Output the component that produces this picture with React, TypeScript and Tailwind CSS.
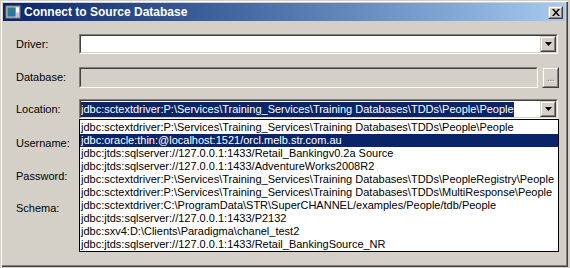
import React from "react";

const items = [
  "jdbc:sctextdriver:P:\\Services\\Training_Services\\Training Databases\\TDDs\\People\\People",
  "jdbc:oracle:thin:@localhost:1521/orcl.melb.str.com.au",
  "jdbc:jtds:sqlserver://127.0.0.1:1433/Retail_Bankingv0.2a Source",
  "jdbc:jtds:sqlserver://127.0.0.1:1433/AdventureWorks2008R2",
  "jdbc:sctextdriver:P:\\Services\\Training_Services\\Training Databases\\TDDs\\PeopleRegistry\\People",
  "jdbc:sctextdriver:P:\\Services\\Training_Services\\Training Databases\\TDDs\\MultiResponse\\People",
  "jdbc:sctextdriver:C:\\ProgramData\\STR\\SuperCHANNEL/examples/People/tdb/People",
  "jdbc:jtds:sqlserver://127.0.0.1:1433/P2132",
  "jdbc:sxv4:D:\\Clients\\Paradigma\\chanel_test2",
  "jdbc:jtds:sqlserver://127.0.0.1:1433/Retail_BankingSource_NR",
];

function Raised({ children, className = "" }: { children?: React.ReactNode; className?: string }) {
  return (
    <div className={"border border-t-[#d4d0c8] border-l-[#d4d0c8] border-b-[#404040] border-r-[#404040] " + className}>
      <div className="w-full h-full border border-t-white border-l-white border-b-[#808080] border-r-[#808080] bg-[#d4d0c8] flex items-center justify-center">
        {children}
      </div>
    </div>
  );
}

function Sunken({ children, className = "", inner = "bg-white" }: { children?: React.ReactNode; className?: string; inner?: string }) {
  return (
    <div className={"border border-t-[#808080] border-l-[#808080] border-b-white border-r-white " + className}>
      <div className={"w-full h-full border border-t-[#404040] border-l-[#404040] border-b-[#d4d0c8] border-r-[#d4d0c8] flex " + inner}>
        {children}
      </div>
    </div>
  );
}

function Arrow() {
  return (
    <svg width="7" height="4" viewBox="0 0 7 4" className="block">
      <path d="M0 0h7L3.5 4z" fill="#000" />
    </svg>
  );
}

function Combo({ children }: { children?: React.ReactNode }) {
  return (
    <Sunken className="w-[479px] h-[20px]">
      <div className="flex-1 flex items-center overflow-hidden">{children}</div>
      <Raised className="w-[16px] h-full">
        <Arrow />
      </Raised>
    </Sunken>
  );
}

function Label({ children }: { children: React.ReactNode }) {
  return <div className="w-[63px] leading-[13px]">{children}</div>;
}

export default function App() {
  return (
    <div className="w-[570px] h-[268px] bg-[#d4d0c8] font-['Liberation_Sans',Arial,sans-serif] text-[11px] text-black">
      <div className="relative w-[568px] h-[267px] bg-[#d4d0c8] p-[3px] shadow-[inset_1px_1px_0_#d4d0c8,inset_2px_2px_0_#ffffff,inset_-1px_-1px_0_#404040,inset_-2px_-2px_0_#808080]">
        {/* Title bar */}
        <div className="h-[18px] flex items-center bg-linear-to-r from-[#0a246a] to-[#a6caf0] pl-[2px] pr-[2px]">
          <svg width="16" height="16" viewBox="0 0 16 16" className="block shrink-0">
            <defs>
              <linearGradient id="ig" x1="0" y1="0" x2="1" y2="1">
                <stop offset="0" stopColor="#1f8a6a" />
                <stop offset="1" stopColor="#3a64c8" />
              </linearGradient>
            </defs>
            <rect x="1" y="2" width="14" height="12" fill="#c0c0c0" stroke="#808080" />
            <rect x="2.5" y="3.5" width="8" height="9" fill="url(#ig)" />
            <rect x="11" y="3.5" width="3" height="5" fill="#fff" />
          </svg>
          <span className="ml-[3px] text-white font-bold text-[12px] leading-[14px] whitespace-nowrap">
            Connect to Source Database
          </span>
          <div className="flex-1" />
          <Raised className="w-[15px] h-[13px]">
            <svg width="8" height="7" viewBox="0 0 8 7" className="block">
              <path d="M0 0h2l2 2.5L6 0h2L5 3.5 8 7H6L4 4.5 2 7H0l3-3.5z" fill="#000" />
            </svg>
          </Raised>
        </div>

        {/* Form */}
        <div className="flex flex-col pl-[13px]">
          <div className="flex items-center h-[20px] mt-[13px]">
            <Label>Driver:</Label>
            <Combo />
          </div>
          <div className="flex items-center h-[21px] mt-[13px]">
            <Label>Database:</Label>
            <Sunken className="w-[459px] h-[21px]" inner="bg-[#d4d0c8]" />
            <Raised className="ml-[4px] w-[17px] h-[21px]">
              <span className="text-[#808080] [text-shadow:1px_1px_0_#fff] leading-[8px] pb-[2px] tracking-[-0.5px]">...</span>
            </Raised>
          </div>
          <div className="flex items-center h-[20px] mt-[11px]">
            <Label>Location:</Label>
            <Combo>
              <span className="bg-[#0a246a] text-white whitespace-nowrap h-[15px] leading-[15px] ml-0">
                {items[0]}
              </span>
            </Combo>
          </div>
          <div className="flex items-center h-[20px] mt-[14px]">
            <Label>Username:</Label>
            <Sunken className="w-[479px] h-[20px]" />
          </div>
          <div className="flex items-center h-[20px] mt-[13px]">
            <Label>Password:</Label>
            <Sunken className="w-[479px] h-[20px]" />
          </div>
          <div className="flex items-center h-[20px] mt-[12px]">
            <Label>Schema:</Label>
            <Sunken className="w-[479px] h-[20px]" />
          </div>
        </div>

        {/* Dropdown list */}
        <div className="absolute left-[79px] top-[119px] w-[480px] h-[133px] border border-black bg-white py-[1px]">
          {items.map((t, i) => (
            <div
              key={i}
              className={
                "h-[13px] leading-[13px] pl-[1px] whitespace-nowrap overflow-hidden " +
                (i === 1 ? "bg-[#0a246a] text-white" : "")
              }
            >
              {t}
            </div>
          ))}
        </div>
      </div>
    </div>
  );
}
